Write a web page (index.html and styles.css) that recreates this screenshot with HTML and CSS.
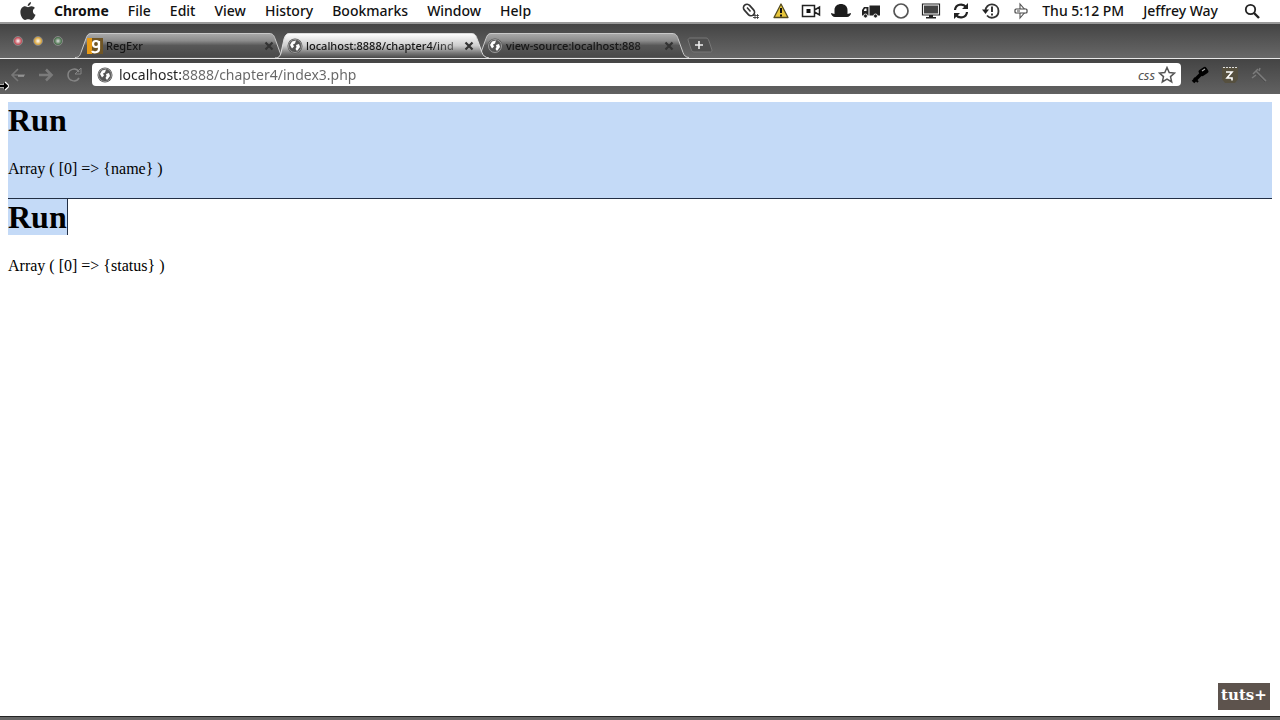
FILE: index.html
```html
<!DOCTYPE html>
<html lang="en">
<head>
  <meta charset="utf-8">
  <title>localhost:8888/chapter4/index3.php</title>
  <link rel="stylesheet" href="styles.css">
</head>
<body>
  <header class="menubar">
    <button class="apple" aria-label="Apple menu">
      <svg width="16" height="18" viewBox="0 0 16 18"><path fill="#333" d="M11 0c.2 2-1.500 4-3.300 4C7.500 2.200 9.200.3 11 0zM8 5.200c.8 0 1.800-1 3.500-1 1.500 0 2.700.8 3.400 1.800-2.900 1.700-2.500 5.500.6 6.700C14.700 15 13 18 11.300 18c-1.200 0-1.700-.7-3.100-.7s-2 .7-3.100.7C3 18 .4 13.800.4 10.200.4 6.500 2.700 4.300 5 4.300c1.400 0 2.300.9 3 .9z"/></svg>
    </button>
    <nav class="menus">
      <button class="app-name">Chrome</button>
      <button>File</button>
      <button>Edit</button>
      <button>View</button>
      <button>History</button>
      <button>Bookmarks</button>
      <button>Window</button>
      <button>Help</button>
    </nav>
    <div class="status">
      <div class="status-icons">
        <svg viewBox="0 0 20 18"><g fill="none" stroke="#333" stroke-width="1.700"><rect x="1.500" y="4.500" width="13" height="7" rx="3.500" transform="rotate(48 8 8)"/><path d="M6 5.500l3.500 4" stroke-width="1.500"/><path d="M14 12v5M16.500 12v5M12 13.500h6M12 15.500h6" stroke-width=".8"/></g></svg>
        <svg viewBox="0 0 20 18"><path d="M10 2l7 13.500H3z" fill="#e8c63a" stroke="#554c20" stroke-width="1.300" stroke-linejoin="round"/><path d="M10 6v5M10 12.500v2" stroke="#111" stroke-width="2"/></svg>
        <svg viewBox="0 0 20 18"><path d="M1.500 3.500h12v11h-12zM13.500 8l5-3v8l-5-3" fill="none" stroke="#222" stroke-width="1.500"/><path d="M5.500 7h4v4h-4z" fill="#111"/></svg>
        <svg viewBox="0 0 20 18"><path d="M0 11l3.500 1V8c0-8 13-8 13 0v4l3.500-1c0 2-2 4-4 4H4c-2 0-4-2-4-4z" fill="#1c1c1c"/></svg>
        <svg viewBox="0 0 20 18"><path d="M8.500 3.500H19v10H8.500zM1 8l2-3h4.500v8.500H1z" fill="#222"/><path d="M3 8l1-1.500h1.500V9H3z" fill="#fff"/><circle cx="4.500" cy="14" r="2" fill="#222" stroke="#fff" stroke-width=".8"/><circle cx="14.500" cy="14" r="2" fill="#222" stroke="#fff" stroke-width=".8"/></svg>
        <svg viewBox="0 0 20 18"><circle cx="10" cy="9" r="7" fill="none" stroke="#555" stroke-width="1.700"/></svg>
        <svg viewBox="0 0 20 18"><path d="M1.500 2h17v11h-17z" fill="#fff" stroke="#222" stroke-width="1.200"/><path d="M3 3.500h14v8H3z" fill="#444"/><path d="M8 13h4v2h3v1.500H5V15h3z" fill="#222"/></svg>
        <svg viewBox="0 0 20 18"><path d="M4 8c.5-6 8-7 11-3M16 10c-.5 6-8 7-11 3" fill="none" stroke="#222" stroke-width="2.200"/><path d="M17 1v6h-6zM3 17v-6h6z" fill="#222"/></svg>
        <svg viewBox="0 0 20 18"><path d="M4.500 9c0-9 13-8.500 13 0 0 7-8 8.500-11.500 4.500" fill="none" stroke="#333" stroke-width="1.800"/><path d="M1 7.500h7L4.500 12z" fill="#222"/><path d="M11 4.500V10M11 11.500v2" stroke="#222" stroke-width="1.800"/></svg>
        <svg viewBox="0 0 20 18"><path d="M9 7V2l6 7-6 7v-5" fill="none" stroke="#555" stroke-width="1.100"/><rect x="4" y="7" width="12" height="4" rx="1" fill="#fff" stroke="#444" stroke-width="1.200"/><path d="M6 9h3" stroke="#444"/></svg>
      </div>
      <time class="clock">Thu 5:12 PM</time>
      <span class="user">Jeffrey Way</span>
      <button class="spotlight" aria-label="Spotlight">
        <svg width="16" height="16" viewBox="0 0 16 16"><circle cx="6.500" cy="6.500" r="4.700" fill="none" stroke="#222" stroke-width="1.800"/><path d="M10 10l5 5" stroke="#222" stroke-width="2.400"/></svg>
      </button>
    </div>
  </header>

  <div class="tabstrip">
    <div class="lights">
      <button class="light red" aria-label="Close"></button>
      <button class="light yellow" aria-label="Minimize"></button>
      <button class="light green" aria-label="Zoom"></button>
    </div>

    <svg class="defs" width="0" height="0" aria-hidden="true">
      <defs>
        <linearGradient id="tab-back" x1="0" y1="0" x2="0" y2="1">
          <stop offset="0" stop-color="#aaa"/>
          <stop offset=".3" stop-color="#8c8c8c"/>
          <stop offset=".5" stop-color="#585858"/>
          <stop offset="1" stop-color="#484848"/>
        </linearGradient>
        <linearGradient id="tab-front" x1="0" y1="0" x2="0" y2="1">
          <stop offset="0" stop-color="#fff"/>
          <stop offset=".5" stop-color="#ccc"/>
          <stop offset=".8" stop-color="#777"/>
          <stop offset="1" stop-color="#484848"/>
        </linearGradient>
        <symbol id="globe" viewBox="0 0 16 16">
          <circle cx="8" cy="8" r="7.500" fill="#555"/>
          <circle cx="8" cy="8" r="6.500" fill="none" stroke="#999" stroke-width="1"/>
          <path d="M3 7l2-3.500 4-1-1 3-2 1 1 2-2 2zM9 7l3-1 1 3-3 4-1.500-2 1-2z" fill="#fff"/>
        </symbol>
        <symbol id="cross" viewBox="0 0 10 10">
          <path d="M1.500 1.500l7 7M8.500 1.500l-7 7" stroke="currentColor" stroke-width="2.200"/>
        </symbol>
      </defs>
    </svg>

    <div class="tabs">
      <div class="tab">
        <svg class="tab-shape" viewBox="0 0 214 25" preserveAspectRatio="none"><path d="M0 24.500c4 0 5-2 6-5l5-14c1-3 2-5 5-5h178c4 0 5 2 6 5l5 14c1 3 3 5 8 5" fill="url(#tab-back)" stroke="#c9c9c9"/></svg>
        <svg class="favicon" viewBox="0 0 16 16"><path d="M0 0h16v16H0z" fill="#e79a16"/><path d="M5 0h11v16H5z" fill="#6f5525"/><path d="M12 3v8c0 4-6 4-7 2M12 6c0-4-6-4-6 0s6 4 6 0" fill="none" stroke="#fff" stroke-width="2.200"/></svg>
        <button class="tab-title">RegExr</button>
        <button class="tab-close" aria-label="Close tab"><svg width="10" height="10"><use href="#cross"/></svg></button>
      </div>
      <div class="tab active">
        <svg class="tab-shape" viewBox="0 0 214 25" preserveAspectRatio="none"><path d="M0 25c4 0 5-2 6-5l3-14c1-3 2-5.500 5-5.500h182c4 0 5 2 6 5l5 14c1 3 3 5 7 5.500" fill="url(#tab-front)" stroke="#ddd"/></svg>
        <svg class="favicon"><use href="#globe"/></svg>
        <button class="tab-title">localhost:8888/chapter4/ind</button>
        <button class="tab-close" aria-label="Close tab"><svg width="10" height="10"><use href="#cross"/></svg></button>
      </div>
      <div class="tab">
        <svg class="tab-shape" viewBox="0 0 214 25" preserveAspectRatio="none"><path d="M0 24.500c4 0 5-2 6-5l5-14c1-3 2-5 5-5h181c4 0 5 2 6 5l5 14c1 3 3 5 6 5" fill="url(#tab-back)" stroke="#c9c9c9"/></svg>
        <svg class="favicon"><use href="#globe"/></svg>
        <button class="tab-title">view-source:localhost:888</button>
        <button class="tab-close" aria-label="Close tab"><svg width="10" height="10"><use href="#cross"/></svg></button>
      </div>
    </div>
    <button class="new-tab" aria-label="New tab">
      <svg width="26" height="16" viewBox="0 0 26 16"><path d="M3 1h16c2 0 2 1 3 3l3 9c0 2-1 2-2 2H7c-2 0-2-1-3-3L1 3c0-1 1-2 2-2z" fill="#505050" stroke="#777"/><path d="M12 4v8M8 8h8" stroke="#eee" stroke-width="1.600"/></svg>
    </button>
  </div>

  <div class="toolbar">
    <div class="nav-buttons">
      <button aria-label="Back"><svg width="16" height="16" viewBox="0 0 16 16"><path d="M8 2L2 8l6 6M2 8h13" fill="none" stroke="#777" stroke-width="1.600"/><path d="M8 9h6" stroke="#bbb"/></svg></button>
      <button aria-label="Forward"><svg width="16" height="16" viewBox="0 0 16 16"><path d="M1 8h12M8 2.500L13.500 8 8 13.500" fill="none" stroke="#7b7b7b" stroke-width="2.600"/></svg></button>
      <button aria-label="Reload"><svg width="16" height="16" viewBox="0 0 16 16"><path d="M13 5C10 0 2 2 2 8s8 8 11 3" fill="none" stroke="#858585" stroke-width="1.500"/><path d="M15 1v6H9z" fill="none" stroke="#858585"/></svg></button>
    </div>
    <div class="omnibox">
      <svg class="favicon"><use href="#globe"/></svg>
      <input class="url" type="text" aria-label="Address" value="localhost:8888/chapter4/index3.php">
      <button class="css-button">css</button>
      <button class="star" aria-label="Bookmark this page">
        <svg width="18" height="18" viewBox="0 0 18 18"><path d="M9 1.500l2.200 5 5.300.5-4 3.600 1.200 5.400L9 13.200 4.300 16l1.200-5.400-4-3.600 5.300-.5z" fill="#fff" stroke="#555" stroke-width="1.500"/></svg>
      </button>
    </div>
    <div class="extensions">
      <button aria-label="Passwords"><svg width="18" height="18" viewBox="0 0 18 18"><path d="M2 16l9-9" stroke="#000" stroke-width="3.500"/><path d="M3 12l4 4" stroke="#000" stroke-width="2"/><rect x="8" y="2" width="9" height="7" rx="2" fill="#000" transform="rotate(-35 12.500 5.500)"/><path d="M11 5l3-2" stroke="#aaa" stroke-width="1.200"/></svg></button>
      <button aria-label="Extension"><svg width="18" height="18" viewBox="0 0 18 18"><path d="M1 1h16v12l-3 4H4l-3-4z" fill="#56503f"/><path d="M2 1.500h14" stroke="#ddd" stroke-dasharray="2 1"/><path d="M5 6h6L6 12h5v2.500" fill="none" stroke="#fff" stroke-width="1.600"/></svg></button>
      <button aria-label="Settings"><svg width="18" height="18" viewBox="0 0 18 18"><path d="M5 5l10 10M2 8l5-5M9 2L8 5M1 12l4-3" fill="none" stroke="#7c7c7c" stroke-width="1.500"/><path d="M6 8l8 8" stroke="#4c4c4c"/></svg></button>
    </div>
  </div>

  <main class="page">
    <div class="selected">
      <h1>Run</h1>
      <p>Array ( [0] =&gt; {name} )</p>
    </div>
    <h1><span class="selected-text">Run</span></h1>
    <p>Array ( [0] =&gt; {status} )</p>
    <div class="badge">tuts+</div>
  </main>
  <footer class="window-edge"></footer>

  <svg class="cursor" width="9" height="10" viewBox="0 0 9 10"><path d="M0 5h7M4.500 1.500L8 5 4.500 8.500" fill="none" stroke="#fff" stroke-width="3"/><path d="M0 5h6" stroke="#000" stroke-width="2"/><path d="M4 1l4.500 4L4 9z" fill="#000"/></svg>
</body>
</html>
```
FILE: styles.css
```css
* {
  box-sizing: border-box;
}
body {
  margin: 0;
  min-height: 100vh;
  display: flex;
  flex-direction: column;
  background-color: #fff;
  font-family: "Noto Sans", sans-serif;
  position: relative;
}
button {
  padding: 0;
  border: 0;
  background: none;
  font: inherit;
  color: inherit;
}
svg {
  display: block;
  flex-shrink: 0;
}

/* menu bar */
.menubar {
  display: flex;
  align-items: center;
  height: 24px;
  padding: 0 20px;
  border-bottom: 2px solid #999;
  font-size: 14px;
  font-weight: 500;
  line-height: 20px;
  color: #111;
}
.menus {
  display: flex;
  gap: 19px;
  margin-left: 18px;
}
.app-name {
  font-weight: bold;
}
.status {
  display: flex;
  align-items: center;
  margin-left: auto;
}
.status-icons {
  display: flex;
  gap: 10px;
  margin-right: 11px;
}
.status-icons svg {
  width: 20px;
  height: 18px;
}
.clock {
  margin-right: 19px;
}
.user {
  margin-right: 26px;
}

/* tabs */
.tabstrip {
  display: flex;
  align-items: flex-end;
  height: 35px;
  background: linear-gradient(#444, #686868);
  border-bottom: 1px solid #e8e8e8;
}
.lights {
  display: flex;
  gap: 10px;
  width: 75px;
  padding: 0 0 12px 13px;
}
.light {
  width: 10px;
  height: 10px;
  border: 1px solid #888;
  border-radius: 50%;
}
.red {
  background: radial-gradient(#fff, #c4525c 60%);
}
.yellow {
  background: radial-gradient(#fff, #d9a640 60%);
}
.green {
  background: radial-gradient(#ddd, #4d7350 60%);
}
.defs {
  position: absolute;
}
.tabs {
  display: flex;
}
.tab {
  position: relative;
  z-index: 0;
  display: flex;
  align-items: center;
  width: 214px;
  height: 25px;
  padding: 0 15px 0 12px;
  margin-right: -14px;
  font-size: 11px;
  font-weight: 500;
  color: #161616;
}
.tab.active {
  z-index: 1;
}
.tab-shape {
  position: absolute;
  inset: 0;
  width: 100%;
  height: 100%;
  z-index: -1;
}
.favicon {
  width: 16px;
  height: 16px;
}
.tab-title {
  flex: 1;
  min-width: 0;
  margin: 0 3px;
  text-align: left;
  white-space: nowrap;
  mask-image: linear-gradient(to right, #000 80%, #0006);
}
.tab-close {
  color: #333;
}
.new-tab {
  margin: 0 0 5px 12px;
}

/* toolbar */
.toolbar {
  display: flex;
  align-items: center;
  height: 35px;
  padding: 0 11px 4px 10px;
  background: linear-gradient(#444, #626262);
}
.nav-buttons {
  display: flex;
  gap: 12px;
  margin-right: 10px;
}
.omnibox {
  flex: 1;
  display: flex;
  align-items: center;
  height: 23px;
  padding: 0 5px;
  background-color: #fff;
  border-radius: 4px;
}
.url {
  flex: 1;
  min-width: 0;
  height: 20px;
  padding: 0;
  margin-left: 6px;
  border: 0;
  outline: 0;
  font: 14px/20px "Noto Sans", sans-serif;
  color: transparent;
  /* host is darker than the port and path */
  background: linear-gradient(to right, #222 63px, #666 63px);
  background-clip: text;
  -webkit-background-clip: text;
}
.css-button {
  margin-right: 3px;
  font-size: 13px;
  font-style: italic;
  color: #555;
}
.extensions {
  display: flex;
  gap: 12px;
  margin-left: 10px;
}

/* page */
.page {
  position: relative;
  flex: 1;
  padding: 8px;
  font: 16px/18px "Liberation Serif", serif;
  color: #000;
}
.page h1 {
  margin: 0 0 21px;
  font-size: 32px;
  line-height: 37px;
}
.page p {
  margin: 0;
}
.selected {
  padding-bottom: 20px;
  background-color: #c4daf7;
  border-bottom: 1px solid #222f45;
}
.selected-text {
  background-color: #c4daf7;
  border-right: 1px solid #222f45;
}
.badge {
  position: absolute;
  right: 10px;
  bottom: 6px;
  width: 52px;
  height: 27px;
  background-color: #5d534d;
  color: #fff;
  font: bold 15px/25px "DejaVu Serif", serif;
  text-align: center;
}
.window-edge {
  height: 4px;
  background-color: #666;
  border-top: 1px solid #222;
}
.cursor {
  position: absolute;
  left: 0;
  top: 81px;
}
```
